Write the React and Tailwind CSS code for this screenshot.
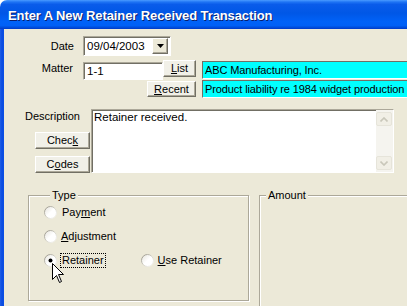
import React from "react";

const sunken =
  "border border-t-[#ACA899] border-l-[#ACA899] border-b-white border-r-white shadow-[inset_1px_1px_0_#716F64]";

function Btn({ children, className }) {
  return (
    <div
      className={
        "flex items-center justify-center bg-[#F1F0E8] border border-t-white border-l-white border-b-[#716F64] border-r-[#716F64] shadow-[inset_-1px_-1px_0_#ACA899] text-[11px] leading-[13px] text-black " +
        className
      }
    >
      {children}
    </div>
  );
}

function Radio({ checked }) {
  return (
    <svg width="13" height="13" viewBox="0 0 13 13" className="shrink-0">
      <defs>
        <linearGradient id="rb" x1="0" y1="0" x2="1" y2="1">
          <stop offset="0" stopColor="#8F8C80" />
          <stop offset="0.55" stopColor="#D8D6CC" />
          <stop offset="1" stopColor="#FFFFFF" />
        </linearGradient>
        <linearGradient id="rf" x1="0" y1="0" x2="1" y2="1">
          <stop offset="0" stopColor="#E4E2DA" />
          <stop offset="0.5" stopColor="#FFFFFF" />
          <stop offset="1" stopColor="#FFFFFF" />
        </linearGradient>
      </defs>
      <circle cx="6.5" cy="6.5" r="6" fill="url(#rf)" stroke="url(#rb)" strokeWidth="1" />
      {checked && <circle cx="6.5" cy="6.5" r="2" fill="#000" />}
    </svg>
  );
}

function ScrollBtn({ up }) {
  return (
    <div className="w-[16px] h-[14px] rounded-[2px] bg-[#F1EFE6] border border-[#E6E4DA] flex items-center justify-center">
      <svg width="8" height="5" viewBox="0 0 8 5">
        <path
          d={up ? "M0.5 4.5 L4 1 L7.5 4.5" : "M0.5 0.5 L4 4 L7.5 0.5"}
          fill="none"
          stroke="#C9C7BA"
          strokeWidth="1.6"
        />
      </svg>
    </div>
  );
}

export default function App() {
  return (
    <div className="relative w-[407px] h-[306px] overflow-hidden bg-white font-['Liberation_Sans',Arial,sans-serif] text-[11px] leading-[13px] text-black">
      {/* Title bar */}
      <div className="h-[29px] rounded-tl-[7px] bg-[linear-gradient(180deg,#4A9BFF_0%,#1F74F4_7%,#0A5CEA_15%,#0057E6_45%,#0062F8_75%,#0060F6_88%,#0049D6_96%,#0038C8_100%)] flex items-center pl-[8px] pt-[2px]">
        <span className="text-white font-bold text-[13px] leading-[16px] tracking-[-0.1px] [text-shadow:1px_1px_0_#0A1E6A] whitespace-nowrap">
          Enter A New Retainer Received Transaction
        </span>
      </div>

      {/* Body */}
      <div className="flex h-[277px]">
        <div className="w-[4px] shrink-0 h-full bg-[linear-gradient(90deg,#1F5EE6_0%,#0B4CE0_50%,#0A4FE6_100%)]" />
        <div className="flex-1 min-w-0 bg-[#ECE9D8] flex flex-col pt-[7px]">
          {/* Date row */}
          <div className="flex items-center h-[20px]">
            <div className="w-[70px] shrink-0 text-right">Date</div>
            <div className={"ml-[9px] shrink-0 w-[88px] h-[20px] bg-white flex items-center pl-[3px] pr-[2px] " + sunken}>
              <span className="flex-1 text-[11.5px]">09/04/2003</span>
              <div className="w-[16px] h-[16px] bg-[#ECE9D8] border border-t-white border-l-white border-b-[#716F64] border-r-[#716F64] shadow-[inset_-1px_-1px_0_#ACA899] flex items-center justify-center">
                <svg width="7" height="4" viewBox="0 0 7 4">
                  <path d="M0 0 H7 L3.5 4 Z" fill="#000" />
                </svg>
              </div>
            </div>
          </div>

          {/* Matter row */}
          <div className="flex mt-[4px]">
            <div className="w-[69px] shrink-0 text-right pt-[2px]">Matter</div>
            <div className="ml-[10px] shrink-0 w-[113px] flex flex-col">
              <div className="flex">
                <div className={"mt-[2px] w-[80px] h-[18px] bg-white flex items-center pl-[3px] text-[11.5px] " + sunken}>
                  1-1
                </div>
                <Btn className="w-[33px] h-[17px]">
                  <span className="underline">L</span>ist
                </Btn>
              </div>
              <Btn className="self-end w-[49px] h-[16px] mt-[1px]">
                <span className="underline">R</span>ecent
              </Btn>
            </div>
            <div className="ml-[6px] shrink-0 mt-[1px] flex flex-col gap-[1px]">
              <div className="w-[210px] h-[18px] bg-[#00FFFF] border border-t-[#716F64] border-l-[#716F64] border-b-white border-r-white flex items-center pl-[2px] whitespace-nowrap text-[11px] tracking-[-0.1px]">
                ABC Manufacturing, Inc.
              </div>
              <div className="w-[210px] h-[18px] bg-[#00FFFF] border border-t-[#716F64] border-l-[#716F64] border-b-white border-r-white flex items-center pl-[2px] whitespace-nowrap text-[11px] tracking-[-0.1px]">
                Product liability re 1984 widget production
              </div>
            </div>
          </div>

          {/* Description row */}
          <div className="flex mt-[11px]">
            <div className="ml-[20px] shrink-0 w-[66px] flex flex-col items-end">
              <div className="mr-[10px] mt-[1px]">Description</div>
              <Btn className="mt-[9px] w-[55px] h-[17px]">
                Chec<span className="underline">k</span>
              </Btn>
              <Btn className="mt-[7px] w-[55px] h-[17px]">
                C<span className="underline">o</span>des
              </Btn>
            </div>
            <div className={"ml-[1px] shrink-0 w-[303px] h-[64px] bg-white flex " + sunken}>
              <div className="flex-1 pl-[2px] pt-[1px] text-[11.5px]">Retainer received.</div>
              <div className="w-[17px] h-full bg-[#F5F4EF] flex flex-col justify-between py-[2px] pr-[1px]">
                <ScrollBtn up />
                <ScrollBtn />
              </div>
            </div>
          </div>

          {/* Group boxes */}
          <div className="flex mt-[16px]">
            <fieldset className="ml-[24px] shrink-0 w-[221px] h-[112px] border border-[#ACA899] shadow-[inset_1px_1px_0_#fff,1px_1px_0_#fff] pl-[15px] pt-[4px]">
              <legend className="ml-[6px] px-[2px] bg-[#ECE9D8]">Type</legend>
              <div className="flex flex-col gap-[11px]">
                <div className="flex items-center h-[13px]">
                  <Radio />
                  <span className="ml-[5px]">
                    Pay<span className="underline">m</span>ent
                  </span>
                </div>
                <div className="flex items-center h-[13px]">
                  <Radio />
                  <span className="ml-[4px]">
                    <span className="underline">A</span>djustment
                  </span>
                </div>
                <div className="flex items-center h-[13px]">
                  <Radio checked />
                  <span className="ml-[3px] h-[15px] border border-dotted border-black px-[1px] leading-[13px]">
                    Retainer
                  </span>
                  <div className="ml-[35px] flex items-center">
                    <Radio />
                    <span className="ml-[4px]">
                      <span className="underline">U</span>se Retainer
                    </span>
                  </div>
                </div>
              </div>
            </fieldset>
            <fieldset className="ml-[10px] shrink-0 w-[200px] h-[130px] border border-[#ACA899] shadow-[inset_1px_1px_0_#fff,1px_1px_0_#fff]">
              <legend className="ml-[6px] px-[2px] bg-[#ECE9D8]">Amount</legend>
            </fieldset>
          </div>
        </div>
      </div>

      {/* Mouse cursor */}
      <svg
        className="absolute left-[52px] top-[263px]"
        width="13"
        height="21"
        viewBox="0 0 13 21"
      >
        <path
          d="M0.5 0.5 L0.5 16.5 L4.5 12.5 L7.5 19.5 L9.5 18.5 L6.5 11.5 L11.5 11.5 Z"
          fill="#fff"
          stroke="#000"
          strokeWidth="1"
          strokeLinejoin="miter"
        />
      </svg>
    </div>
  );
}
